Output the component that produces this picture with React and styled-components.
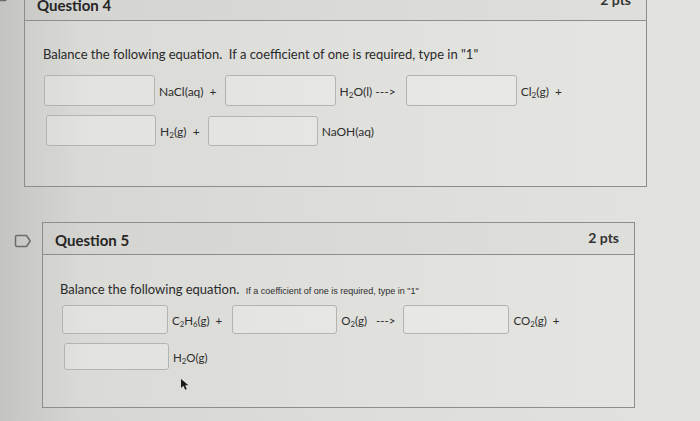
import React from "react";
import styled, { createGlobalStyle } from "styled-components";

const GlobalStyle = createGlobalStyle`
  html, body {
    margin: 0;
    padding: 0;
    height: 100%;
    overflow: hidden;
  }
  body {
    background: linear-gradient(90deg, #c4c4c0 0%, #d6d6d2 12%, #dcdcd8 45%, #e0e0dc 80%, #e2e2de 100%);
    font-family: Lato, "Open Sans", "Liberation Sans", sans-serif;
    color: #2e2e2e;
  }
`;

const Page = styled.div`
  display: flex;
  flex-direction: column;
  height: 421px;
  overflow: hidden;
`;

const QuestionBlock = styled.section`
  display: flex;
  align-items: flex-start;
  margin-top: ${(p) => p.$top}px;
`;

const Gutter = styled.div`
  width: ${(p) => p.$width}px;
  flex: none;
  display: flex;
  padding-top: ${(p) => p.$iconTop}px;
  box-sizing: border-box;
`;

const FlagIcon = styled.svg`
  display: block;
  margin-left: ${(p) => p.$left}px;
  flex: none;
`;

const Card = styled.div`
  width: ${(p) => p.$width}px;
  border: 1px solid #8d8d89;
  background: rgba(255, 255, 255, 0.1);
  box-sizing: border-box;
`;

const Header = styled.div`
  height: ${(p) => p.$height}px;
  display: flex;
  align-items: center;
  justify-content: space-between;
  padding: 0 15px 0 12px;
  border-bottom: 1px solid #8d8d89;
  background: rgba(0, 0, 0, 0.025);
  box-sizing: border-box;
`;

const Title = styled.h2`
  margin: 0;
  font-size: 15px;
  font-weight: 700;
  color: #262626;
  padding-top: ${(p) => p.$shift || 0}px;
`;

const Points = styled.span`
  font-size: 14px;
  font-weight: 700;
  color: #333;
  padding-bottom: ${(p) => p.$shift || 0}px;
`;

const Body = styled.div`
  padding: ${(p) => p.$pad};
  display: flex;
  flex-direction: column;
`;

const Prompt = styled.p`
  margin: 0;
  height: 16px;
  font-size: 13px;
  line-height: 16px;
  color: #2a2a2a;
  white-space: pre;
`;

const SmallNote = styled.span`
  font-family: "Liberation Sans", Arial, sans-serif;
  font-size: 9px;
  line-height: 1;
  color: #2e2e2e;
`;

const EquationRow = styled.div`
  display: flex;
  align-items: center;
  margin-top: ${(p) => p.$gap}px;
  margin-left: ${(p) => p.$indent || 0}px;
`;

const Blank = styled.input`
  width: ${(p) => p.$w}px;
  height: ${(p) => p.$h}px;
  box-sizing: border-box;
  border: 1px solid #b3b3af;
  border-radius: 3px;
  background: rgba(255, 255, 255, 0.22);
  margin: 0;
  padding: 0 6px;
  outline: none;
  flex: none;
`;

const Species = styled.span`
  font-size: ${(p) => p.$size}px;
  color: #2e2e2e;
  margin: 0 ${(p) => p.$after}px 0 4px;
  white-space: pre;
  line-height: 1;
  padding-top: 2px;

  sub {
    font-size: 0.68em;
    vertical-align: -0.3em;
    line-height: 0;
  }
`;

const Pointer = styled.svg`
  position: absolute;
  left: 180px;
  top: 378px;
`;

const Flag = ({ left }) => (
  <FlagIcon $left={left} width="18" height="14" viewBox="0 0 18 14">
    <path
      d="M3 1.5 H12.5 L16.2 7 L12.5 12.5 H3 Q1.5 12.5 1.5 11 V3 Q1.5 1.5 3 1.5 Z"
      fill="none"
      stroke="#6b6b68"
      strokeWidth="1.5"
      strokeLinejoin="round"
    />
  </FlagIcon>
);

export default function App() {
  return (
    <>
      <GlobalStyle />
      <Page>
        <QuestionBlock $top={-14}>
          <Gutter $width={24} $iconTop={2}>
            <Flag left={-7} />
          </Gutter>
          <Card $width={623}>
            <Header $height={34}>
              <Title $shift={2}>Question 4</Title>
              <Points $shift={8}>2 pts</Points>
            </Header>
            <Body $pad="25px 0 40px 18px">
              <Prompt>Balance the following equation.  If a coefficient of one is required, type in "1"</Prompt>
              <EquationRow $gap={13} $indent={1}>
                <Blank $w={111} $h={31} aria-label="coefficient 1" />
                <Species $size={12} $after={8}>NaCl(aq)  +</Species>
                <Blank $w={111} $h={31} aria-label="coefficient 2" />
                <Species $size={12} $after={10}>H<sub>2</sub>O(l) ---&gt;</Species>
                <Blank $w={111} $h={31} aria-label="coefficient 3" />
                <Species $size={12} $after={8}>Cl<sub>2</sub>(g)  +</Species>
              </EquationRow>
              <EquationRow $gap={9} $indent={3}>
                <Blank $w={110} $h={31} aria-label="coefficient 4" />
                <Species $size={12} $after={8}>H<sub>2</sub>(g)  +</Species>
                <Blank $w={110} $h={30} aria-label="coefficient 5" />
                <Species $size={12} $after={8}>NaOH(aq)</Species>
              </EquationRow>
            </Body>
          </Card>
        </QuestionBlock>

        <QuestionBlock $top={35}>
          <Gutter $width={42} $iconTop={12}>
            <Flag left={14} />
          </Gutter>
          <Card $width={593}>
            <Header $height={32}>
              <Title $shift={3}>Question 5</Title>
              <Points $shift={2}>2 pts</Points>
            </Header>
            <Body $pad="26px 0 37px 17px">
              <Prompt>
                Balance the following equation.  <SmallNote>If a coefficient of one is required, type in "1"</SmallNote>
              </Prompt>
              <EquationRow $gap={8} $indent={2}>
                <Blank $w={106} $h={29} aria-label="coefficient 1" />
                <Species $size={11.5} $after={10}>C<sub>2</sub>H<sub>6</sub>(g)  +</Species>
                <Blank $w={105} $h={29} aria-label="coefficient 2" />
                <Species $size={11.5} $after={8}>O<sub>2</sub>(g)   ---&gt;</Species>
                <Blank $w={106} $h={29} aria-label="coefficient 3" />
                <Species $size={11.5} $after={8}>CO<sub>2</sub>(g)  +</Species>
              </EquationRow>
              <EquationRow $gap={9} $indent={4}>
                <Blank $w={105} $h={27} aria-label="coefficient 4" />
                <Species $size={11.5} $after={8}>H<sub>2</sub>O(g)</Species>
              </EquationRow>
            </Body>
          </Card>
        </QuestionBlock>
        <Pointer width="10" height="13" viewBox="0 0 10 13">
          <path d="M1 1 L1 10 L3.4 7.8 L5.2 11.8 L6.8 11 L5.1 7.2 L8.4 7.2 Z" fill="#1a1a1a" />
        </Pointer>
      </Page>
    </>
  );
}
